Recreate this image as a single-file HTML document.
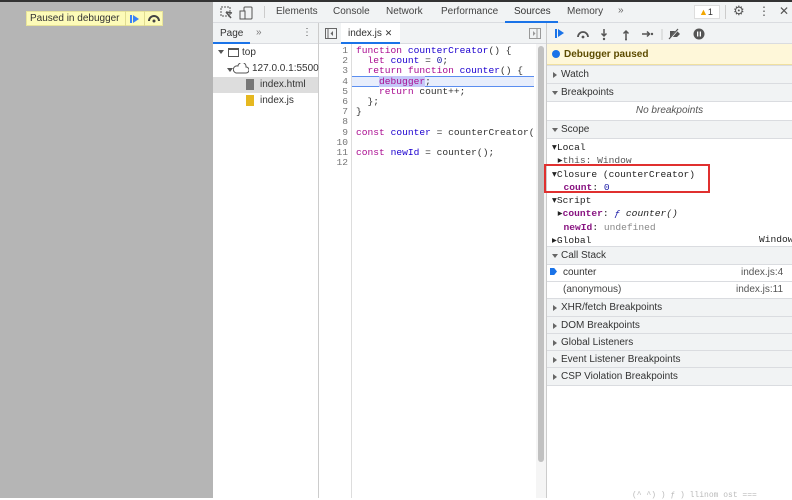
<!DOCTYPE html>
<html><head><style>
*{box-sizing:border-box;margin:0;padding:0}
body{width:792px;height:498px;overflow:hidden;font-family:"Liberation Sans",sans-serif;font-size:10px;color:#333;background:#fff;position:relative}
.a{position:absolute}
.mono{font-family:"Liberation Mono",monospace;font-size:9.6px}
.hd{position:absolute;left:547px;width:245px;background:#f1f3f4;border-top:1px solid #dadce0;height:18px;line-height:17px;padding-left:14px;font-size:10px;color:#333}
.hd:before{content:"";position:absolute;left:5px;top:7px;border-left:3px solid transparent;border-right:3px solid transparent;border-top:4px solid #666}
.hd.c:before{left:6px;top:6px;border-top:3px solid transparent;border-bottom:3px solid transparent;border-left:4px solid #666;border-right:0}
.kw{color:#aa0d91}.fn{color:#1c00cf}.v{color:#1a1aa6}.k{color:#881280;font-weight:bold}
</style></head><body>
<div class="a" style="left:0;top:0;width:792px;height:2px;background:#333"></div>
<div class="a" style="left:0;top:2px;width:213px;height:496px;background:#b5b5b5"></div>
<div class="a" style="left:26px;top:11px;width:137px;height:15px;background:#fdfbb8;border:1px solid #e8e49a"></div>
<div class="a" style="left:30px;top:13px;font-size:10px;color:#333">Paused in debugger</div>
<div class="a" style="left:125px;top:11px;width:1px;height:15px;background:#e0dc90"></div>
<div class="a" style="left:144px;top:11px;width:1px;height:15px;background:#e0dc90"></div>
<div class="a" style="left:130px;top:15px;width:2px;height:8px;background:#3b82f6"></div>
<div class="a" style="left:133px;top:15px;border-top:4px solid transparent;border-bottom:4px solid transparent;border-left:6px solid #3b82f6"></div>
<svg class="a" style="left:147px;top:13px" width="14" height="10"><path d="M2 8 A5 5 0 0 1 12 8" fill="none" stroke="#444" stroke-width="2"/><circle cx="7" cy="8" r="1.5" fill="#444"/></svg>

<!-- devtools top bar -->
<div class="a" style="left:213px;top:2px;width:579px;height:21px;background:#f1f3f4;border-bottom:1px solid #dadce0"></div>
<svg class="a" style="left:220px;top:6px" width="36" height="14"><rect x="1" y="1" width="9" height="9" fill="none" stroke="#555" stroke-dasharray="2 1"/><path d="M6 6 L11 12 M6 6 L12 7" stroke="#555" stroke-width="1.5"/><rect x="24" y="1" width="8" height="12" rx="1" fill="none" stroke="#555"/><rect x="20" y="5" width="5" height="8" fill="#f1f3f4" stroke="#555"/></svg>
<div class="a" style="left:264px;top:6px;width:1px;height:12px;background:#ccc"></div>
<div class="a" style="top:6px;left:276px;color:#444">Elements</div>
<div class="a" style="top:6px;left:333px;color:#444">Console</div>
<div class="a" style="top:6px;left:386px;color:#444">Network</div>
<div class="a" style="top:6px;left:441px;color:#444">Performance</div>
<div class="a" style="top:6px;left:514px;color:#333">Sources</div>
<div class="a" style="left:505px;top:21px;width:53px;height:2px;background:#1a73e8"></div>
<div class="a" style="top:6px;left:567px;color:#444">Memory</div>
<div class="a" style="top:5px;left:618px;color:#666">»</div>
<div class="a" style="left:694px;top:5px;width:26px;height:14px;border:1px solid #ddd;background:#fff;font-size:9px;padding-left:4px;line-height:12px"><span style="color:#f2a600">▲</span>1</div>
<div class="a" style="left:725px;top:5px;width:1px;height:14px;background:#ccc"></div>
<div class="a" style="left:733px;top:3px;font-size:13px;color:#555">⚙</div>
<div class="a" style="left:758px;top:4px;font-size:12px;color:#555">⋮</div>
<div class="a" style="left:779px;top:4px;font-size:12px;color:#555">✕</div>

<!-- second row -->
<div class="a" style="left:213px;top:23px;width:579px;height:21px;background:#f1f3f4;border-bottom:1px solid #dadce0"></div>
<div class="a" style="left:220px;top:28px;color:#333">Page</div>
<div class="a" style="left:213px;top:42px;width:37px;height:2px;background:#1a73e8"></div>
<div class="a" style="left:256px;top:27px;color:#777">»</div>
<div class="a" style="left:302px;top:27px;color:#555">⋮</div>
<div class="a" style="left:318px;top:23px;width:1px;height:475px;background:#ccc"></div>
<svg class="a" style="left:325px;top:28px" width="12" height="11"><rect x=".5" y=".5" width="11" height="10" fill="none" stroke="#666"/><path d="M3 1v9" stroke="#666"/><path d="M8 3 L5.5 5.5 L8 8z" fill="#666"/></svg>
<div class="a" style="left:341px;top:23px;width:59px;height:21px;background:#fff"></div>
<div class="a" style="left:348px;top:28px;color:#333">index.js <span style="font-size:9px">✕</span></div>
<div class="a" style="left:341px;top:42px;width:59px;height:2px;background:#1a73e8"></div>
<svg class="a" style="left:529px;top:28px" width="12" height="11"><rect x=".5" y=".5" width="11" height="10" fill="none" stroke="#999"/><path d="M8 1v9" stroke="#999"/><path d="M4 3 L6.5 5.5 L4 8z" fill="#999"/></svg>
<div class="a" style="left:546px;top:23px;width:1px;height:475px;background:#ccc"></div>
<!-- debugger toolbar -->
<div class="a" style="left:555px;top:29px;width:2px;height:9px;background:#1a73e8"></div>
<div class="a" style="left:558px;top:29px;border-top:4.5px solid transparent;border-bottom:4.5px solid transparent;border-left:6px solid #1a73e8"></div>
<svg class="a" style="left:575px;top:27px" width="150" height="14"><path d="M3 10 A5 5 0 0 1 13 10" fill="none" stroke="#555" stroke-width="1.8"/><circle cx="8" cy="10" r="1.4" fill="#555"/><path d="M29 2v7M26.5 6.5L29 9l2.5-2.5" fill="none" stroke="#555" stroke-width="1.5"/><circle cx="29" cy="12" r="1.2" fill="#555"/><path d="M51 12V4M48.5 6.5L51 4l2.5 2.5" fill="none" stroke="#555" stroke-width="1.5"/><circle cx="51" cy="12.5" r="1" fill="#555"/><path d="M67 7h7M72 4.5L74.5 7 72 9.5" fill="none" stroke="#555" stroke-width="1.5"/><circle cx="77" cy="7" r="1.2" fill="#555"/><path d="M87 2v11" stroke="#ccc"/><path d="M95 4h7l3 3-3 3h-7z" fill="#555"/><path d="M94 13L104 1" stroke="#f1f3f4" stroke-width="2"/><path d="M94 12L103 2" stroke="#555" stroke-width="1.2"/><circle cx="124" cy="7" r="5.5" fill="#555"/><rect x="122" y="4.5" width="1.3" height="5" fill="#fff"/><rect x="124.7" y="4.5" width="1.3" height="5" fill="#fff"/></svg>

<!-- navigator -->
<div class="a" style="left:218px;top:50px;border-left:3px solid transparent;border-right:3px solid transparent;border-top:4px solid #555"></div>
<div class="a" style="left:228px;top:48px;width:11px;height:9px;border:1px solid #555;border-top-width:2px"></div>
<div class="a" style="left:242px;top:47px;color:#333">top</div>
<div class="a" style="left:227px;top:68px;border-left:3px solid transparent;border-right:3px solid transparent;border-top:4px solid #555"></div>
<svg class="a" style="left:233px;top:63px" width="16" height="11"><path d="M3 10h10a3 3 0 0 0 0-6 4 4 0 0 0-8-1 3.5 3.5 0 0 0-2 7z" fill="none" stroke="#555"/></svg>
<div class="a" style="left:252px;top:63px;color:#333">127.0.0.1:5500</div>
<div class="a" style="left:213px;top:77px;width:105px;height:16px;background:#ddd"></div>
<div class="a" style="left:246px;top:79px;width:8px;height:11px;background:#777"></div>
<div class="a" style="left:260px;top:79px;color:#333">index.html</div>
<div class="a" style="left:246px;top:95px;width:8px;height:11px;background:#e6b820"></div>
<div class="a" style="left:260px;top:95px;color:#333">index.js</div>

<!-- editor -->
<div class="a" style="left:351px;top:44px;width:1px;height:454px;background:#ddd"></div>
<div class="a" style="left:352px;top:76px;width:182px;height:11px;background:#e8eefc;border-top:1px solid #5b8ef0;border-bottom:1px solid #5b8ef0"></div>
<div class="a mono" style="left:328px;top:46px;width:20px;text-align:right;line-height:10.2px;color:#777;white-space:pre">1
2
3
4
5
6
7
8
9
10
11
12</div>
<div class="a mono" style="left:356px;top:46px;line-height:10.2px;white-space:pre;color:#333;width:180px;overflow:hidden"><span class="kw">function</span> <span class="fn">counterCreator</span>() {
  <span class="kw">let</span> <span class="fn">count</span> = <span class="v">0</span>;
  <span class="kw">return</span> <span class="kw">function</span> <span class="fn">counter</span>() {
    <span class="kw" style="background:#c5c8f8">debugger</span>;
    <span class="kw">return</span> count++;
  };
}

<span class="kw">const</span> <span class="fn">counter</span> = counterCreator()

<span class="kw">const</span> <span class="fn">newId</span> = counter();
</div>
<div class="a" style="left:536px;top:44px;width:10px;height:454px;background:#f5f5f5"></div>
<div class="a" style="left:538px;top:46px;width:6px;height:416px;background:#c1c1c1;border-radius:3px"></div>

<!-- sidebar -->
<div class="a" style="left:547px;top:44px;width:245px;height:21px;background:#fef7d9;border-bottom:1px solid #f0e0a0"></div>
<div class="a" style="left:552px;top:50px;width:8px;height:8px;border-radius:50%;background:#1a73e8"></div>
<div class="a" style="left:564px;top:49px;color:#5c4b00;font-weight:bold">Debugger paused</div>
<div class="hd c" style="top:65px">Watch</div>
<div class="hd" style="top:83px">Breakpoints</div>
<div class="a" style="left:547px;top:101px;width:245px;height:19px;border-top:1px solid #dadce0;text-align:center;font-style:italic;color:#555;line-height:18px">No breakpoints</div>
<div class="hd" style="top:120px">Scope</div>
<div class="a" style="left:547px;top:138px;width:245px;height:1px;background:#dadce0"></div>
<div class="a mono" style="left:552px;top:141px;line-height:13.3px;white-space:pre;color:#222">▾Local
 ▸<span style="color:#555">this: Window</span>
▾Closure (counterCreator)
  <span class="k">count</span>: <span class="v">0</span>
▾Script
 ▸<span class="k">counter</span>: <i><span class="v">ƒ</span> counter()</i>
  <span class="k">newId</span>: <span style="color:#888">undefined</span>
▸Global</div>
<div class="a mono" style="left:759px;top:234px;color:#222">Window</div>
<div class="a" style="left:544px;top:164px;width:166px;height:29px;border:2px solid #e0302f"></div>
<div class="hd" style="top:246px">Call Stack</div>
<div class="a" style="left:547px;top:264px;width:245px;height:17px;border-top:1px solid #dadce0"></div>
<div class="a" style="left:550px;top:268px;width:7px;height:7px;background:#1a73e8;clip-path:polygon(0 0,60% 0,100% 50%,60% 100%,0 100%)"></div>
<div class="a" style="left:563px;top:267px;color:#333">counter</div>
<div class="a" style="left:741px;top:267px;color:#555">index.js:4</div>
<div class="a" style="left:547px;top:281px;width:245px;height:17px;border-top:1px solid #dadce0"></div>
<div class="a" style="left:563px;top:284px;color:#444">(anonymous)</div>
<div class="a" style="left:736px;top:284px;color:#555">index.js:11</div>
<div class="hd c" style="top:298px">XHR/fetch Breakpoints</div>
<div class="hd c" style="top:316px">DOM Breakpoints</div>
<div class="hd c" style="top:333px">Global Listeners</div>
<div class="hd c" style="top:350px">Event Listener Breakpoints</div>
<div class="hd c" style="top:367px">CSP Violation Breakpoints</div>
<div class="a" style="left:547px;top:385px;width:245px;height:1px;background:#dadce0"></div>
<div class="a mono" style="left:632px;top:491px;color:#bbb;font-size:8px">(^ ^)  ) ƒ ) llinom ost ===</div>
</body></html>
